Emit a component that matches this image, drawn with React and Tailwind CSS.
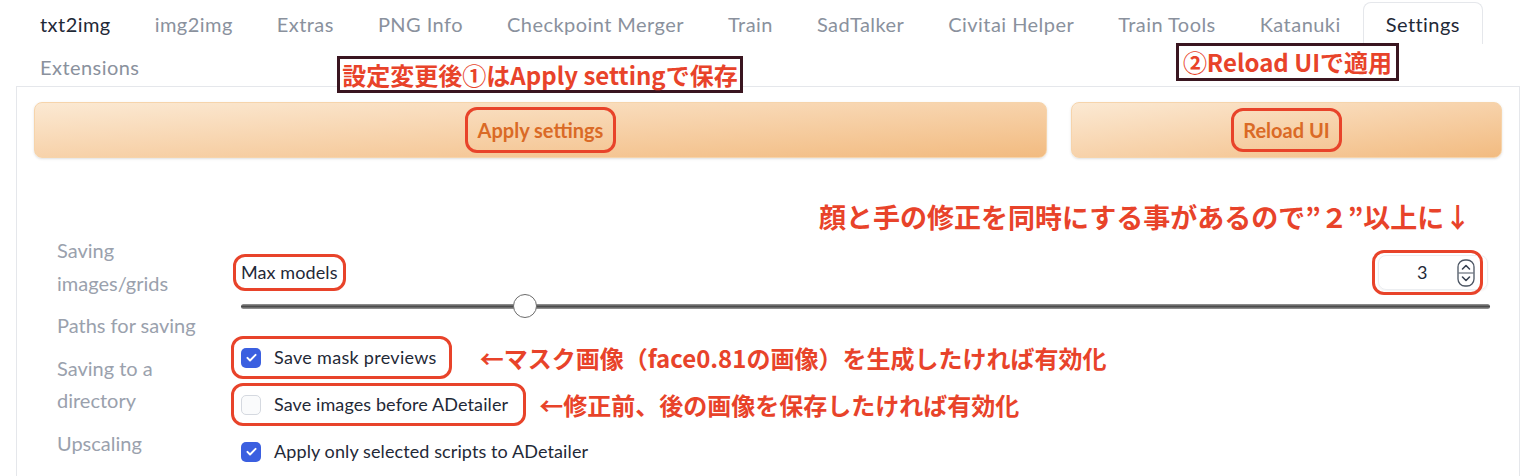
import React from "react";

const tabs = [
  "txt2img",
  "img2img",
  "Extras",
  "PNG Info",
  "Checkpoint Merger",
  "Train",
  "SadTalker",
  "Civitai Helper",
  "Train Tools",
  "Katanuki",
  "Settings",
];

const labels = [["Saving", "images/grids"], ["Paths for saving"], ["Saving to a", "directory"], ["Upscaling"]];

const jp = "font-['Noto_Sans_CJK_JP',sans-serif] font-bold text-[#e8432a]";

// red outline drawn over an element
const Mark = ({ className }) => (
  <span className={"pointer-events-none absolute rounded-xl border-[3px] border-[#e8432a] " + className} />
);

const Check = ({ checked }) =>
  checked ? (
    <span className="flex h-[20px] w-[20px] items-center justify-center rounded-[5px] bg-[#3b5fe0]">
      <svg width="13" height="13" viewBox="0 0 16 16" fill="none">
        <path d="M3 8.5l3.2 3.2L13 4.8" stroke="white" strokeWidth="2.4" strokeLinecap="round" strokeLinejoin="round" />
      </svg>
    </span>
  ) : (
    <span className="h-[20px] w-[20px] rounded-[5px] border border-[#d5d9e0] bg-[#fafbfc]" />
  );

const App = () => {
  return (
    <div className="relative h-[476px] w-[1536px] overflow-hidden bg-white font-['Lato',sans-serif]">
      {/* tabs */}
      <div className="flex h-[44px] items-end pl-[18px] pt-[2px]">
        {tabs.map((t, i) => (
          <div
            key={t}
            className={
              i === 10
                ? "flex h-[42px] items-center rounded-t-lg border border-b-0 border-[#e5e7eb] bg-white px-[22px] pt-[1px] text-[20px] tracking-[0.45px] text-[#1f2937]"
                : i === 0
                ? "flex h-[42px] items-center px-[22px] pt-[1px] text-[20px] tracking-[0.45px] text-[#1f2937]"
                : "flex h-[42px] items-center px-[22px] pt-[1px] text-[20px] tracking-[0.45px] text-[#8a919d]"
            }
          >
            {t}
          </div>
        ))}
      </div>
      <div className="flex h-[42px] items-center pl-[40px] pt-[4px] text-[20px] tracking-[0.45px] text-[#8a919d]">Extensions</div>

      {/* panel */}
      <div className="mx-[16px] h-[400px] border-x border-t border-[#e5e7eb] px-[17px] pt-[15px]">
        <div className="flex gap-[24px]">
          <div className="relative flex h-[56px] w-[1013px] items-center justify-center rounded-lg border border-[#f6d4ab] bg-gradient-to-br from-[#fbe9d3] to-[#f2bb80] text-[20px] font-bold text-[#da6a26] shadow-sm">
            <span className="relative">
              Apply settings
              <Mark className="-inset-x-[13px] -inset-y-[8px]" />
            </span>
          </div>
          <div className="relative flex h-[56px] flex-1 items-center justify-center rounded-lg border border-[#f6d4ab] bg-gradient-to-br from-[#fbe9d3] to-[#f2bb80] text-[20px] font-bold text-[#da6a26] shadow-sm">
            <span className="relative">
              Reload UI
              <Mark className="-inset-x-[12px] -inset-y-[7px]" />
            </span>
          </div>
        </div>

        <div className="mt-[76px] flex">
          <div className="flex w-[207px] flex-col gap-[10px] pl-[23px] text-[20px] leading-[32.5px] text-[#9aa1ad]">
            {labels.map((l) => (
              <div key={l[0]}>
                {l.map((s) => (
                  <div key={s}>{s}</div>
                ))}
              </div>
            ))}
          </div>

          <div className="flex-1 pr-[12px] pt-[21px]">
            <div className="flex h-[35px] items-center justify-between">
              <span className="relative text-[18px] tracking-[0.1px] text-[#1f2937]">
                Max models
                <Mark className="-inset-x-[8px] -inset-y-[5px]" />
              </span>
              <div className="relative mr-[2px] flex h-[35px] w-[110px] items-center justify-between rounded-lg border border-[#eceef1] pl-[38px] pr-[12px] shadow-[0_1px_2px_rgba(0,0,0,0.06)]">
                <span className="text-[18px] text-[#1f2937]">3</span>
                <svg width="18" height="28" viewBox="0 0 18 28" fill="none">
                  <rect x="1" y="1" width="16" height="26" rx="7" stroke="#4b5563" strokeWidth="1.3" />
                  <line x1="1.5" y1="14" x2="16.5" y2="14" stroke="#4b5563" strokeWidth="1" />
                  <path d="M5.5 10l3.5-3.5 3.5 3.5" stroke="#374151" strokeWidth="1.6" strokeLinecap="round" strokeLinejoin="round" />
                  <path d="M5.5 18l3.5 3.5 3.5-3.5" stroke="#374151" strokeWidth="1.6" strokeLinecap="round" strokeLinejoin="round" />
                </svg>
                <Mark className="-left-[7px] right-[4px] -inset-y-[6px]" />
              </div>
            </div>

            {/* slider */}
            <div className="relative mt-[4px] flex h-[24px] items-center">
              <div className="h-[5px] w-full rounded-full bg-gradient-to-b from-[#9a9a9a] via-[#4b4b4b] to-[#a0a0a0]" />
              <span className="absolute left-[272px] top-0 h-[24px] w-[24px] rounded-full border-[1.5px] border-[#6b6b6b] bg-white" />
            </div>

            <div className="mt-[16px] flex flex-col">
              <div className="flex h-[47px] items-center">
                <span className="relative flex items-center gap-[13px]">
                  <Check checked />
                  <span className="text-[18px] tracking-[0.3px] text-[#1f2937]">Save mask previews</span>
                  <Mark className="-left-[10px] -right-[15px] -inset-y-[8px]" />
                </span>
                <span className={"ml-[43px] text-[24px] " + jp}>←マスク画像（face0.81の画像）を生成したければ有効化</span>
              </div>
              <div className="flex h-[47px] items-center">
                <span className="relative flex items-center gap-[13px]">
                  <Check />
                  <span className="text-[18px] tracking-[0.1px] text-[#1f2937]">Save images before ADetailer</span>
                  <Mark className="-left-[10px] -right-[18px] -inset-y-[8px]" />
                </span>
                <span className={"ml-[31px] text-[24px] " + jp}>←修正前、後の画像を保存したければ有効化</span>
              </div>
              <div className="flex h-[47px] items-center gap-[13px]">
                <Check checked />
                <span className="text-[18px] tracking-[0.1px] text-[#1f2937]">Apply only selected scripts to ADetailer</span>
              </div>
            </div>
          </div>
        </div>
      </div>

      {/* annotations */}
      <div className={"absolute left-[337px] top-[56px] flex h-[37px] w-[406px] items-center justify-center border-[3px] border-[#3a1620] bg-white text-[24px] leading-none " + jp}>
        設定変更後①はApply settingで保存
      </div>
      <div className={"absolute left-[1176px] top-[43px] flex h-[38px] w-[223px] items-center justify-center border-[3px] border-[#3a1620] bg-white text-[24px] leading-none " + jp}>
        ②Reload UIで適用
      </div>
      <div className={"absolute left-[819px] top-[203px] text-[27px] leading-none " + jp}>
        顔と手の修正を同時にする事があるので”２”以上に↓
      </div>
    </div>
  );
};

export default App;
